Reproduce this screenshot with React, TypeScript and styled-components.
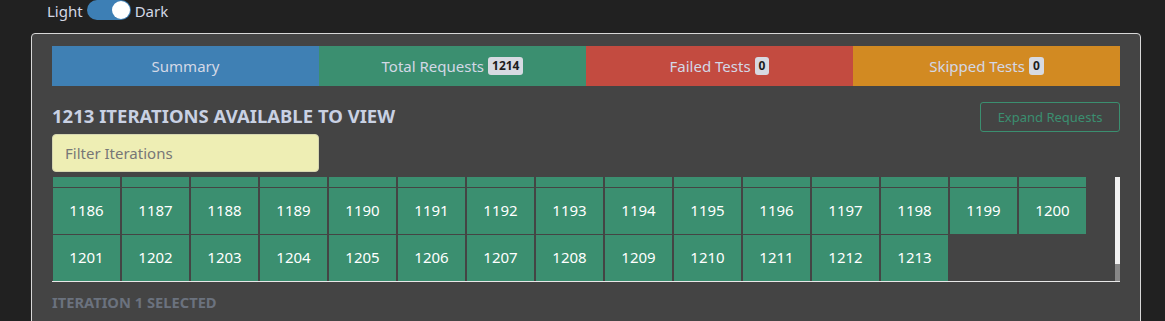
import React, { useEffect, useRef } from "react";
import styled, { createGlobalStyle } from "styled-components";

const GlobalStyle = createGlobalStyle`
  body {
    margin: 0;
    background: #212121;
    font-family: "Noto Sans", "Open Sans", sans-serif;
    color: #d3d8e6;
  }
`;

const TOTAL = 1213;

const App = () => {
  const gridRef = useRef<HTMLDivElement>(null);

  useEffect(() => {
    const el = gridRef.current;
    if (el) el.scrollTop = el.scrollHeight;
  }, []);

  const iterations = Array.from({ length: TOTAL }, (_, i) => i + 1);

  return (
    <>
      <GlobalStyle />
      <ThemeBar>
        <span>Light</span>
        <Toggle>
          <Knob />
        </Toggle>
        <span>Dark</span>
      </ThemeBar>
      <Card>
        <Tabs>
          <Tab bg="#3f80b4">Summary</Tab>
          <Tab bg="#3b8f70">
            Total Requests <Badge>1214</Badge>
          </Tab>
          <Tab bg="#c34b40">
            Failed Tests <Badge>0</Badge>
          </Tab>
          <Tab bg="#d28a22">
            Skipped Tests <Badge>0</Badge>
          </Tab>
        </Tabs>
        <HeaderRow>
          <Title>{TOTAL} Iterations Available To View</Title>
          <ExpandButton>Expand Requests</ExpandButton>
        </HeaderRow>
        <FilterInput placeholder="Filter Iterations" />
        <ScrollFrame>
          <IterationScroll ref={gridRef}>
            <IterationGrid>
              {iterations.map((n) => (
                <IterationButton key={n}>{n}</IterationButton>
              ))}
            </IterationGrid>
          </IterationScroll>
          <ScrollTrack>
            <ScrollThumb />
          </ScrollTrack>
        </ScrollFrame>
        <Selected>Iteration 1 Selected</Selected>
      </Card>
    </>
  );
};

export default App;

const ThemeBar = styled.div`
  display: flex;
  align-items: center;
  gap: 4px;
  height: 24px;
  padding-left: 47px;
  font-size: 15px;
  color: #d3d8e6;
  line-height: 24px;
  margin-top: -1px;
`;

const Toggle = styled.div`
  width: 44px;
  height: 20px;
  border-radius: 10px;
  background: #3d7fb5;
  display: flex;
  align-items: center;
  justify-content: flex-end;
  padding: 0 1px;
  box-sizing: border-box;
  margin-top: -2px;
`;

const Knob = styled.div`
  width: 18px;
  height: 18px;
  border-radius: 50%;
  background: #fff;
`;

const Card = styled.div`
  margin: 10px 0 0 31px;
  width: 1110px;
  box-sizing: border-box;
  border: 1px solid #d8d8d8;
  border-radius: 4px;
  background: #444444;
  padding: 12px 20px 40px 20px;
`;

const Tabs = styled.div`
  display: grid;
  grid-template-columns: repeat(4, 1fr);
  height: 40px;
`;

const Tab = styled.div<{ bg: string }>`
  background: ${(p) => p.bg};
  display: flex;
  align-items: center;
  justify-content: center;
  gap: 4px;
  font-size: 15px;
  color: #d3d8e6;
`;

const Badge = styled.span`
  background: #d7dae2;
  color: #1c1c1c;
  font-size: 12px;
  font-weight: 700;
  border-radius: 3px;
  padding: 1px 4px;
  line-height: 16px;
`;

const HeaderRow = styled.div`
  display: flex;
  justify-content: space-between;
  align-items: center;
  margin-top: 16px;
`;

const Title = styled.h2`
  margin: 0;
  font-size: 18.5px;
  font-weight: 700;
  text-transform: uppercase;
  color: #c9d1e3;
  position: relative;
  top: -2px;
`;

const ExpandButton = styled.button`
  width: 140px;
  height: 30px;
  background: transparent;
  border: 1px solid #3b8f70;
  border-radius: 3px;
  color: #3b8f70;
  font-family: inherit;
  font-size: 13px;
  padding: 0;
`;

const FilterInput = styled.input`
  display: block;
  width: 267px;
  height: 38px;
  box-sizing: border-box;
  margin-top: 2px;
  background: #eeeeb4;
  border: 1px solid #d6d6b0;
  border-radius: 4px;
  padding: 0 12px;
  font-family: inherit;
  font-size: 15px;
  color: #333;
  &::placeholder {
    color: #777;
  }
`;

const ScrollFrame = styled.div`
  display: flex;
  margin-top: 5px;
  height: 104px;
  border-bottom: 1px solid #e8e8e8;
`;

const IterationScroll = styled.div`
  flex: 1;
  overflow-y: scroll;
  scrollbar-width: none;
  &::-webkit-scrollbar {
    display: none;
  }
`;

const ScrollTrack = styled.div`
  width: 5px;
  background: #f1f1f1;
  display: flex;
  flex-direction: column;
  justify-content: flex-end;
`;

const ScrollThumb = styled.div`
  height: 17px;
  background: #888;
`;

const IterationGrid = styled.div`
  display: grid;
  grid-template-columns: repeat(15, 67px);
  grid-auto-rows: 46px;
  column-gap: 2px;
  row-gap: 1px;
  padding-left: 1px;
`;

const IterationButton = styled.div`
  background: #3b8f70;
  color: #fff;
  font-size: 15px;
  display: flex;
  align-items: center;
  justify-content: center;
  padding-bottom: 2px;
  box-sizing: border-box;
`;

const Selected = styled.div`
  margin-top: 10px;
  font-size: 14.7px;
  font-weight: 700;
  text-transform: uppercase;
  color: #6b727e;
`;
